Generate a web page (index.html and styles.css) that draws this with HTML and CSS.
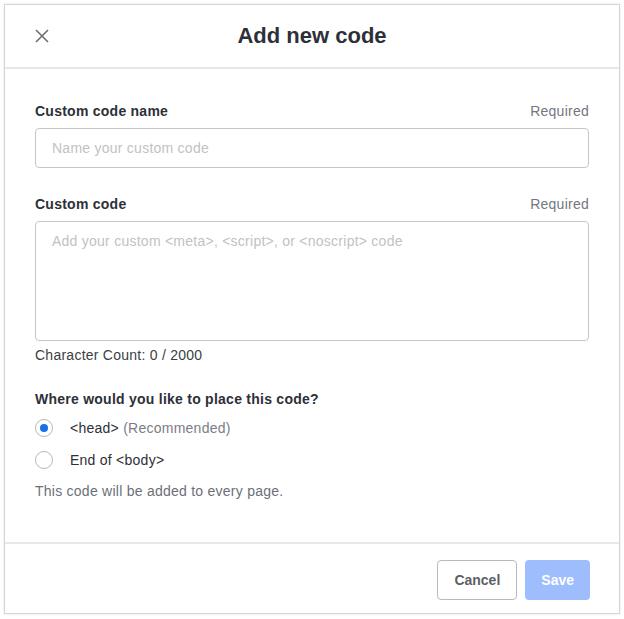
FILE: index.html
```html
<!DOCTYPE html>
<html lang="en">
  <head>
    <meta charset="UTF-8" />
    <meta name="viewport" content="width=device-width, initial-scale=1.0" />
    <title>Add new code</title>
    <link rel="stylesheet" href="styles.css">
  </head>
  <body>
    <div class="modal">
      <div class="modal-header">
        <button class="close-button" aria-label="Close">
          <svg width="14" height="14" viewBox="0 0 14 14">
            <path d="M1 1L13 13M13 1L1 13" stroke="#6b6e73" stroke-width="1.6" fill="none" />
          </svg>
        </button>
        <h1 class="modal-title">Add new code</h1>
      </div>
      <div class="modal-body">
        <div class="field">
          <div class="field-label">
            <label for="codeName">Custom code name</label>
            <span class="required">Required</span>
          </div>
          <input type="text" id="codeName" class="input-field" placeholder="Name your custom code" autocomplete="off" />
        </div>
        <div class="field">
          <div class="field-label">
            <label for="codeBody">Custom code</label>
            <span class="required">Required</span>
          </div>
          <textarea id="codeBody" class="input-field textarea" placeholder="Add your custom <meta>, <script>, or <noscript> code"></textarea>
          <div class="char-count">Character Count: 0 / 2000</div>
        </div>
        <div class="placement">
          <div class="placement-title">Where would you like to place this code?</div>
          <label class="radio-row">
            <span class="radio checked"></span>
            <span>&lt;head&gt; <span class="muted">(Recommended)</span></span>
          </label>
          <label class="radio-row">
            <span class="radio"></span>
            <span>End of &lt;body&gt;</span>
          </label>
          <div class="hint">This code will be added to every page.</div>
        </div>
      </div>
      <div class="modal-footer">
        <button class="button button-secondary">Cancel</button>
        <button class="button button-primary" disabled>Save</button>
      </div>
    </div>
  </body>
</html>
```

FILE: styles.css
```css
body {
  margin: 0;
  padding: 4px;
  font-family: "Liberation Sans", Arial, sans-serif;
  background-color: #ffffff;
  color: #2d3038;
}
.modal {
  display: flex;
  flex-direction: column;
  width: 616px;
  height: 610px;
  box-sizing: border-box;
  border: 1px solid #d6d6d6;
  box-shadow: 0 0 2px rgba(0, 0, 0, 0.12);
  background-color: #ffffff;
}
.modal-header {
  position: relative;
  display: flex;
  align-items: center;
  justify-content: center;
  height: 62px;
  border-bottom: 2px solid #e8e8e8;
}
.close-button {
  position: absolute;
  left: 30px;
  top: 24px;
  display: flex;
  padding: 0;
  border: none;
  background: none;
  cursor: pointer;
}
.modal-title {
  margin: 0;
  font-size: 22px;
  font-weight: 600;
  color: #2d3038;
}
.modal-body {
  flex: 1;
  padding: 34px 30px 0;
  letter-spacing: 0.25px;
}
.field {
  margin-bottom: 28px;
}
.field + .field {
  margin-bottom: 0;
}
.field-label {
  display: flex;
  justify-content: space-between;
  align-items: baseline;
  margin-bottom: 9px;
  font-size: 14px;
}
.field-label label {
  font-weight: 700;
}
.required {
  color: #747780;
}
.input-field {
  display: block;
  width: 100%;
  box-sizing: border-box;
  height: 40px;
  padding: 0 16px;
  border: 1px solid #c6c6c6;
  border-radius: 4px;
  font-family: inherit;
  font-size: 14px;
  letter-spacing: 0.25px;
  color: #2d3038;
  outline: none;
}
.input-field::placeholder {
  color: #c2c2c2;
}
.textarea {
  height: 120px;
  padding: 11px 16px;
  resize: none;
}
.char-count {
  margin-top: 6px;
  font-size: 14px;
  color: #3b3e45;
}
.placement {
  margin-top: 28px;
}
.placement-title {
  font-size: 14px;
  font-weight: 700;
  margin-bottom: 5px;
}
.radio-row {
  display: flex;
  align-items: center;
  gap: 17px;
  height: 32px;
  font-size: 14px;
  color: #2d3038;
}
.radio {
  width: 18px;
  height: 18px;
  box-sizing: border-box;
  border: 1px solid #b8b8b8;
  border-radius: 50%;
  display: flex;
  align-items: center;
  justify-content: center;
}
.radio.checked::after {
  content: "";
  width: 8px;
  height: 8px;
  border-radius: 50%;
  background-color: #1a6ef0;
}
.muted {
  color: #7a7d85;
}
.hint {
  margin-top: 7px;
  font-size: 14px;
  color: #6c6f77;
}
.modal-footer {
  display: flex;
  justify-content: flex-end;
  gap: 8px;
  padding: 16px 29px 13px;
  border-top: 2px solid #e8e8e8;
}
.button {
  height: 40px;
  padding: 0 16px;
  border-radius: 4px;
  font-family: inherit;
  font-size: 14px;
  font-weight: 700;
  cursor: pointer;
}
.button-secondary {
  background-color: #ffffff;
  border: 1px solid #b9b9b9;
  color: #5c5f66;
}
.button-primary {
  background-color: #9ebdfd;
  border: none;
  color: #ffffff;
}
```
